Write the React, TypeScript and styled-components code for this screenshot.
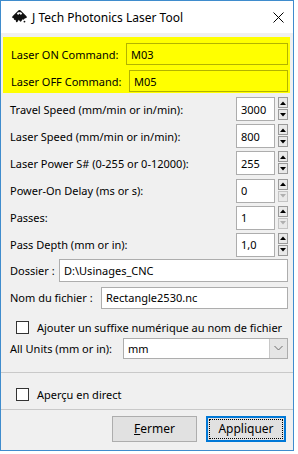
import React from 'react';
import styled, { createGlobalStyle } from 'styled-components';

const GlobalStyle = createGlobalStyle`
  html, body {
    margin: 0;
    padding: 0;
    background: #ffffff;
  }
  * {
    box-sizing: border-box;
  }
`;

const Window = styled.div`
  width: 294px;
  height: 451px;
  border: 1px solid #3f8ccd;
  background: #f0f0f0;
  display: flex;
  flex-direction: column;
  font-family: 'Noto Sans', 'Open Sans', sans-serif;
  font-size: 11px;
  color: #000;
`;

const TitleBar = styled.div`
  height: 32px;
  background: #ffffff;
  display: flex;
  align-items: center;
  padding: 0 8px 0 10px;
`;

const TitleText = styled.span`
  flex: 1;
  margin-left: 4px;
  font-size: 12px;
`;

const CloseButton = styled.div`
  width: 12px;
  height: 12px;
  margin-right: 1px;
  display: flex;
  align-items: center;
  justify-content: center;
`;

const Highlight = styled.div`
  margin: 4px 3px 0 2px;
  background: #ffff00;
  padding: 6px 2px 1px 8px;
  display: flex;
  flex-direction: column;
  gap: 5px;
`;

const Body = styled.div`
  padding: 0 5px 0 9px;
  display: flex;
  flex-direction: column;
`;

const FieldRow = styled.div<{ $top?: number; $height?: number }>`
  display: flex;
  align-items: center;
  justify-content: space-between;
  height: ${(p) => p.$height ?? 24}px;
  margin-top: ${(p) => p.$top ?? 0}px;
`;

const SpinList = styled.div`
  margin-top: 4px;
  display: flex;
  flex-direction: column;
  gap: 3.2px;
`;

const Label = styled.span`
  white-space: nowrap;
`;

const TextBox = styled.div<{ $width: number; $yellow?: boolean }>`
  width: ${(p) => p.$width}px;
  height: 100%;
  background: ${(p) => (p.$yellow ? '#ffff00' : '#ffffff')};
  border: 1px solid ${(p) => (p.$yellow ? '#b3b300' : '#adadad')};
  display: flex;
  align-items: center;
  padding-left: 4px;
`;

const Spinner = styled.div`
  display: flex;
  align-items: stretch;
  gap: 3px;
  height: 100%;
`;

const SpinArrows = styled.div`
  width: 10px;
  display: flex;
  flex-direction: column;
  gap: 1px;
  padding: 0 0 1px;
`;

const Arrow = styled.div<{ $down?: boolean; $disabled?: boolean }>`
  flex: 1;
  background: #e9e9e9;
  border: 1px solid ${(p) => (p.$disabled ? '#c4c4c4' : '#9a9a9a')};
  display: flex;
  align-items: center;
  justify-content: center;
  svg {
    transform: ${(p) => (p.$down ? 'rotate(180deg)' : 'none')};
  }
`;

const CheckRow = styled.label<{ $top: number }>`
  display: flex;
  align-items: center;
  height: 17px;
  margin-top: ${(p) => p.$top}px;
  padding-left: 6px;
  white-space: nowrap;
`;

const CheckBox = styled.span`
  flex: none;
  width: 13px;
  height: 13px;
  background: #fff;
  border: 1px solid #333;
  margin-right: 8px;
`;

const Combo = styled.div`
  width: 165px;
  height: 100%;
  background: #fff;
  border: 1px solid #adadad;
  display: flex;
  align-items: center;
  padding-left: 4px;
`;

const ComboValue = styled.span`
  flex: 1;
`;

const ComboButton = styled.div`
  width: 18px;
  height: 100%;
  background: #e5e5e5;
  border-left: 1px solid #c8c8c8;
  display: flex;
  align-items: center;
  justify-content: center;
`;

const Separator = styled.div<{ $top: number }>`
  margin-top: ${(p) => p.$top}px;
  border-top: 1px solid #c9c9c9;
`;

const ButtonBar = styled.div`
  margin-top: 6px;
  padding-right: 7px;
  display: flex;
  justify-content: flex-end;
  gap: 9px;
`;

const Button = styled.button<{ $width: number; $default?: boolean }>`
  position: relative;
  width: ${(p) => p.$width}px;
  height: 26px;
  font: inherit;
  font-size: 12px;
  color: #000;
  background: #e1e1e1;
  border: ${(p) => (p.$default ? '2px solid #0078d7' : '1px solid #adadad')};
  padding: 0;
  &::after {
    content: '';
    display: ${(p) => (p.$default ? 'block' : 'none')};
    position: absolute;
    inset: 1px;
    border: 1px dotted #000;
  }
  u {
    text-decoration: underline;
  }
`;

const InkscapeIcon = () => (
  <svg width="17" height="16" viewBox="0 0 24 22">
    <path d="M12 1c-1 0-1.5.5-2 1L2.5 9.5C1 11 1.6 12.6 3.4 12.6h17.2c1.8 0 2.4-1.6.9-3.1L14 2c-.5-.5-1-1-2-1z" fill="#111" />
    <path d="M8.2 6.2L10 8l2-2 2 2 1.8-1.8L14 4.3h-4z" fill="#fff" />
    <path d="M4 12h16l-1.5 2.2c-.6.8-1.6.8-2.2 0-.5.9-1.2 2-1.8 2.8-.6.8-1.600.8-2 0L11 15c-.6 1-1.4 2.300-2.100 3-.7.6-1.700.4-1.900-.6L6.4 15c-.6.5-1.800.4-2.200-.3z" fill="#111" />
    <circle cx="19" cy="17.5" r="1.3" fill="#111" />
  </svg>
);

const ArrowGlyph: React.FC<{ color: string }> = ({ color }) => (
  <svg width="6" height="4" viewBox="0 0 6 4">
    <polygon points="0,4 3,0.5 6,4" fill={color} />
  </svg>
);

const SpinField: React.FC<{ label: string; value: string; noDown?: boolean }> = ({ label, value, noDown }) => (
  <FieldRow>
    <Label>{label}</Label>
    <Spinner>
      <TextBox $width={39}>{value}</TextBox>
      <SpinArrows>
        <Arrow>
          <ArrowGlyph color="#000" />
        </Arrow>
        <Arrow $down $disabled={noDown}>
          <ArrowGlyph color={noDown ? '#b0b0b0' : '#000'} />
        </Arrow>
      </SpinArrows>
    </Spinner>
  </FieldRow>
);

const spins = [
  { label: 'Travel Speed (mm/min or in/min):', value: '3000' },
  { label: 'Laser Speed (mm/min or in/min):', value: '800' },
  { label: 'Laser Power S# (0-255 or 0-12000):', value: '255' },
  { label: 'Power-On Delay (ms or s):', value: '0', noDown: true },
  { label: 'Passes:', value: '1', noDown: true },
  { label: 'Pass Depth (mm or in):', value: '1,0' },
];

export default function App() {
  return (
    <>
      <GlobalStyle />
      <Window>
        <TitleBar>
          <InkscapeIcon />
          <TitleText>J Tech Photonics Laser Tool</TitleText>
          <CloseButton>
            <svg width="11" height="11" viewBox="0 0 11 11">
              <path d="M0.5 0.5L10.5 10.5M10.5 0.5L0.5 10.5" stroke="#000" strokeWidth="1" />
            </svg>
          </CloseButton>
        </TitleBar>

        <Highlight>
          <FieldRow $height={22}>
            <Label>Laser ON Command:</Label>
            <TextBox $width={162} $yellow>M03</TextBox>
          </FieldRow>
          <FieldRow $height={22}>
            <Label>Laser OFF Command:</Label>
            <TextBox $width={159} $yellow>M05</TextBox>
          </FieldRow>
        </Highlight>

        <Body>
          <SpinList>
            {spins.map((s) => (
              <SpinField key={s.label} {...s} />
            ))}
          </SpinList>

          <FieldRow $top={2} $height={23}>
            <Label>Dossier :</Label>
            <TextBox $width={229}>D:\Usinages_CNC</TextBox>
          </FieldRow>
          <FieldRow $top={5} $height={22}>
            <Label>Nom du fichier :</Label>
            <TextBox $width={187}>Rectangle2530.nc</TextBox>
          </FieldRow>

          <CheckRow $top={10}>
            <CheckBox />
            Ajouter un suffixe numérique au nom de fichier
          </CheckRow>

          <FieldRow $top={2} $height={21}>
            <Label>All Units (mm or in):</Label>
            <Combo>
              <ComboValue>mm</ComboValue>
              <ComboButton>
                <svg width="9" height="6" viewBox="0 0 9 6">
                  <path d="M0.5 1L4.5 5L8.5 1" stroke="#6d6d6d" fill="none" />
                </svg>
              </ComboButton>
            </Combo>
          </FieldRow>
        </Body>

        <Separator $top={13} />
        <Body>
          <CheckRow $top={13}>
            <CheckBox />
            Aperçu en direct
          </CheckRow>
        </Body>
        <Separator $top={6} />

        <ButtonBar>
          <Button $width={85}>
            <u>F</u>ermer
          </Button>
          <Button $width={80} $default>
            Appliquer
          </Button>
        </ButtonBar>
      </Window>
    </>
  );
}
